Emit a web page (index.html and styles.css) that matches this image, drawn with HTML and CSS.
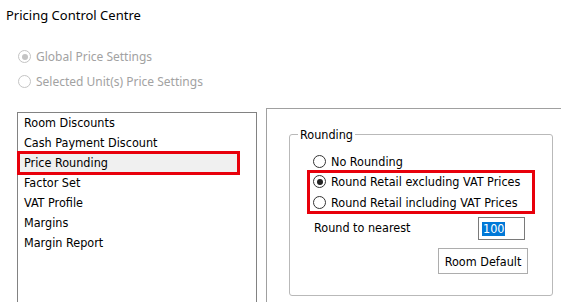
FILE: index.html
```html
<!DOCTYPE html>
<html lang="en">
<head>
    <meta charset="UTF-8">
    <title>Pricing Control Centre</title>
    <link rel="stylesheet" href="styles.css">
</head>
<body>
    <div class="title">Pricing Control Centre</div>

    <!-- scope of the price settings (disabled) -->
    <div class="scope">
        <label class="opt disabled"><span class="radio checked"></span>Global Price Settings</label>
        <label class="opt disabled"><span class="radio"></span>Selected Unit(s) Price Settings</label>
    </div>

    <div class="main">
        <ul class="menu">
            <li>Room Discounts</li>
            <li>Cash Payment Discount</li>
            <li class="selected">Price Rounding</li>
            <li>Factor Set</li>
            <li>VAT Profile</li>
            <li>Margins</li>
            <li>Margin Report</li>
        </ul>

        <div class="panel">
            <fieldset class="group">
                <legend>Rounding</legend>
                <label class="opt first"><span class="radio"></span>No Rounding</label>
                <div class="mark">
                    <label class="opt"><span class="radio checked"></span>Round Retail excluding VAT Prices</label>
                    <label class="opt"><span class="radio"></span>Round Retail including VAT Prices</label>
                </div>
                <div class="nearest">
                    <span class="caption">Round to nearest</span>
                    <span class="field"><span class="sel">100</span></span>
                </div>
                <div class="actions">
                    <button>Room Default</button>
                </div>
            </fieldset>
        </div>
    </div>
</body>
</html>
```

FILE: styles.css
```css
body {
    margin: 0;
    background: #fff;
    color: #000;
    font-family: "DejaVu Sans Condensed", "DejaVu Sans", sans-serif;
    font-size: 12.5px;
    overflow: hidden;
}
.title {
    font-family: "Noto Sans", sans-serif;
    font-size: 13px;
    padding: 6px 0 0 6px;
    height: 20px;
    line-height: 18px;
}
.scope {
    font-family: "Noto Sans", sans-serif;
    font-size: 12px;
    padding: 18px 0 0 18px;
    display: flex;
    flex-direction: column;
}
.opt {
    display: flex;
    align-items: center;
    height: 25px;
}
.opt.disabled {
    color: #a2a2a2;
}
.radio {
    width: 11px;
    height: 11px;
    border: 1px solid #333;
    border-radius: 50%;
    background: #fff;
    margin-right: 5px;
    display: flex;
    align-items: center;
    justify-content: center;
    flex: none;
}
.radio.checked::after {
    content: "";
    width: 6px;
    height: 6px;
    border-radius: 50%;
    background: #222;
}
.disabled .radio {
    border-color: #c4c4c4;
}
.disabled .radio.checked::after {
    background: #c4c4c4;
}
.main {
    display: flex;
    align-items: flex-start;
    padding: 14px 0 0 17px;
    gap: 9px;
}
.menu {
    flex: none;
    list-style: none;
    margin: 4px 0 0;
    padding: 0 0 0 4px;
    width: 234px;
    height: 200px;
    border: 1px solid #828282;
}
.menu li {
    height: 20px;
    line-height: 20px;
    padding-left: 2px;
}
.menu li.selected {
    width: 213px;
    height: 18px;
    line-height: 18px;
    margin: 1px 0 1px -2px;
    padding-left: 4px;
    background: #f0f0f0;
    outline: 3px solid #e8000b;
}
.panel {
    flex: none;
    width: 320px;
    height: 220px;
    border: 1px solid #a0a0a0;
    padding: 18px 0 0 22px;
    box-sizing: border-box;
}
.group {
    margin: 0;
    padding: 6px 0 0;
    width: 264px;
    height: 169px;
    box-sizing: border-box;
    border: 1px solid #b9b9b9;
    border-radius: 3px;
    min-width: 0;
}
.group legend {
    padding: 0 2px;
    margin-left: 8px;
}
.group .opt.first {
    padding: 4px 0 0 23px;
    height: 23px;
    box-sizing: border-box;
}
.mark {
    display: flex;
    flex-direction: column;
    gap: 4px;
    width: 219px;
    margin: -1px 0 0 17px;
    border: 3px solid #e8000b;
    padding-left: 3px;
}
.mark .opt {
    height: 17px;
}
.nearest {
    display: flex;
    align-items: flex-start;
    padding: 3px 0 0 24px;
}
.caption {
    width: 164px;
    padding-top: 3px;
}
.field {
    width: 47px;
    height: 23px;
    border: 1px solid #7a7a7a;
    padding: 3px 0 0 3px;
    box-sizing: border-box;
}
.sel {
    background: #0078d7;
    color: #fff;
    display: inline-block;
    line-height: 14px;
    padding: 0 1px;
}
.actions {
    display: flex;
    justify-content: flex-end;
    padding: 8px 24px 0 0;
}
button {
    font: inherit;
    width: 90px;
    height: 26px;
    background: #fff;
    border: 1px solid #adadad;
    color: #000;
    padding: 0;
}
```
